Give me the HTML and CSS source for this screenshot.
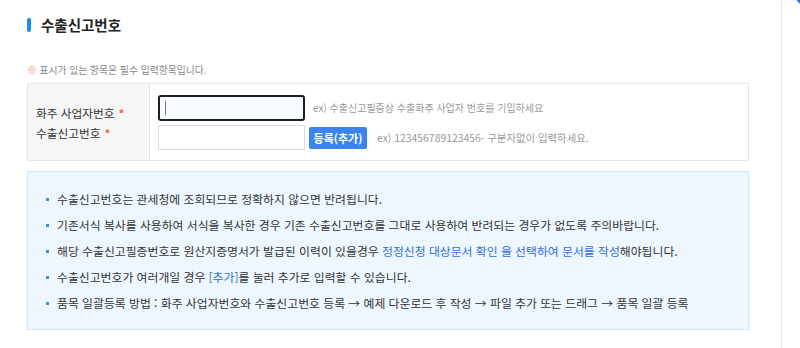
FILE: index.html
```html
<!DOCTYPE html>
<html lang="ko">
<head>
<meta charset="utf-8">
<link rel="stylesheet" href="styles.css">
</head>
<body>
<div class="page">
  <div class="main">
    <h2 class="title"><span class="title-bar"></span>수출신고번호</h2>
    <p class="note"><span class="note-mark">※</span> 표시가 있는 항목은 필수 입력항목입니다.</p>
    <div class="form">
      <div class="label-col">
        <div class="label">화주 사업자번호 <span class="star">*</span></div>
        <div class="label">수출신고번호 <span class="star">*</span></div>
      </div>
      <div class="field-col">
        <div class="row">
          <div class="input focused"><span class="caret"></span></div>
          <span class="hint first">ex) 수출신고필증상 수출화주 사업자 번호를 기입하세요</span>
        </div>
        <div class="row">
          <div class="input second"></div>
          <button class="btn">등록(추가)</button>
          <span class="hint second-hint">ex) 123456789123456- 구분자없이 입력하세요.</span>
        </div>
      </div>
    </div>
    <ul class="info">
      <li>수출신고번호는 관세청에 조회되므로 정확하지 않으면 반려됩니다.</li>
      <li>기존서식 복사를 사용하여 서식을 복사한 경우 기존 수출신고번호를 그대로 사용하여 반려되는 경우가 없도록 주의바랍니다.</li>
      <li>해당 수출신고필증번호로 원산지증명서가 발급된 이력이 있을경우 <span class="blue">정정신청 대상문서 확인 을 선택하여 문서를 작성</span>해야됩니다.</li>
      <li>수출신고번호가 여러개일 경우 <span class="blue">[추가]</span>를 눌러 추가로 입력할 수 있습니다.</li>
      <li>품목 일괄등록 방법 : 화주 사업자번호와 수출신고번호 등록 → 예제 다운로드 후 작성 → 파일 추가 또는 드래그 → 품목 일괄 등록</li>
    </ul>
  </div>
  <div class="side"><span class="dot"></span></div>
</div>
</body>
</html>
```

FILE: styles.css
```css
* { box-sizing: border-box; }
html, body { margin: 0; padding: 0; background: #fff; }
body {
  font-family: "Noto Sans CJK KR", "Noto Sans", sans-serif;
  color: #333;
  width: 800px;
  height: 348px;
  overflow: hidden;
}
.page { display: flex; height: 348px; }
.main { width: 781px; padding-left: 27px; }
.side {
  flex: 1;
  border-left: 1px solid #e6e6e6;
  position: relative;
  overflow: hidden;
}
.dot {
  position: absolute;
  left: 13px;
  top: -18px;
  width: 24px;
  height: 24px;
  border-radius: 50%;
  background: #3d6fe3;
}
.title {
  margin: 15px 0 0;
  height: 20px;
  display: flex;
  align-items: center;
  gap: 10px;
  font-size: 14.5px;
  font-weight: 700;
  color: #222;
  line-height: 20px;
}
.title-bar {
  width: 4px;
  height: 14px;
  border-radius: 2px;
  background: #1a8cf0;
}
.note {
  margin: 28px 0 0;
  font-size: 9.8px;
  line-height: 14px;
  color: #888;
}
.note-mark { color: #ff7a5c; }
.form {
  margin-top: 6px;
  width: 722px;
  height: 78px;
  display: flex;
  border: 1px solid #e4e4e4;
}
.label-col {
  width: 122px;
  background: #f6f6f6;
  border-right: 1px solid #e4e4e4;
  display: flex;
  flex-direction: column;
  justify-content: center;
  padding-left: 8px;
  padding-top: 1px;
}
.label {
  font-size: 11.7px;
  line-height: 20px;
  color: #333;
}
.star { color: #ff5a1e; font-size: 11px; font-weight: 700; margin-left: 1px; }
.field-col {
  flex: 1;
  padding: 11px 0 0 8px;
  display: flex;
  flex-direction: column;
  gap: 4px;
}
.row { display: flex; align-items: center; }
.input {
  width: 147px;
  height: 25px;
  border: 1px solid #dcdcdc;
  background: #fff;
  display: flex;
  align-items: center;
}
.input.focused {
  height: 26px;
  border: 2px solid #1e1e1e;
  border-radius: 3px;
  background: #f6f9ff;
  padding-left: 5px;
}
.caret {
  width: 1px;
  height: 14px;
  background: #777;
}
.btn {
  margin: 0 0 0 4px;
  width: 58px;
  height: 22px;
  border: 0;
  border-radius: 2px;
  background: #3a84ee;
  color: #fff;
  font-family: inherit;
  font-size: 11px;
  font-weight: 700;
  padding: 0;
  line-height: 22px;
}
.hint {
  font-size: 10px;
  color: #999;
  line-height: 14px;
}
.hint.first { margin-left: 8px; }
.hint.second-hint { margin-left: 10px; font-size: 10.4px; }
.info {
  margin: 10px 0 0;
  width: 722px;
  height: 159px;
  list-style: none;
  background: #eef7ff;
  border: 1px solid #cfe5f8;
  padding: 14px 0 0 18px;
}
.info li {
  display: block;
  font-size: 11.85px;
  line-height: 26px;
  color: #333;
  white-space: nowrap;
}
.info li::before {
  content: "";
  display: inline-block;
  vertical-align: middle;
  width: 3px;
  height: 3px;
  margin: 0 8px 2px 0;
  background: #3b8fe6;
}
.blue { color: #2e6fd8; }
```
